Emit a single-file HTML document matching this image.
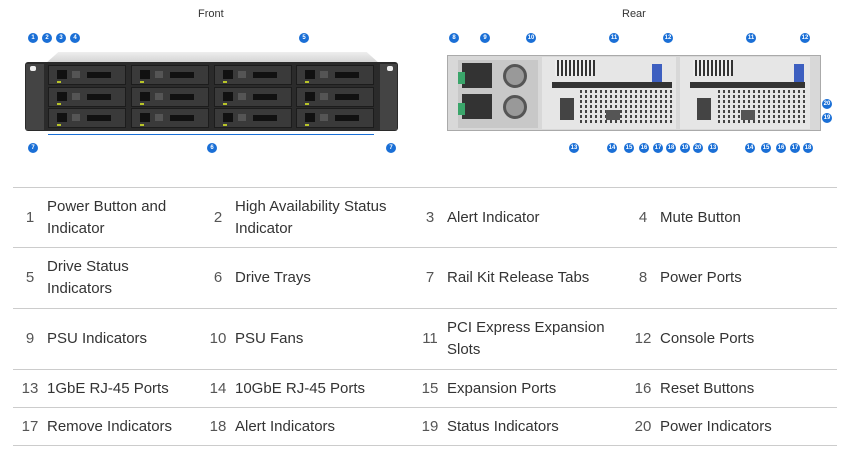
<!DOCTYPE html><html><head><style>
body{margin:0;width:850px;height:459px;background:#fff;font-family:"Liberation Sans",sans-serif;position:relative;overflow:hidden}
.a{position:absolute}
.b{position:absolute;width:10px;height:10px;border-radius:50%;background:#1a6fd6;color:#fff;font-size:6px;line-height:10px;text-align:center;font-weight:bold}
.bay{position:absolute;width:78px;height:20px;background:#3a3a3a;border:1px solid #1c1c1c;box-sizing:border-box}
.bay i{position:absolute;left:8px;top:4px;width:10px;height:9px;background:#111}
.bay u{position:absolute;left:23px;top:5px;width:8px;height:7px;background:#555}
.bay s{position:absolute;left:38px;top:6px;width:24px;height:6px;background:#111}
.bay b{position:absolute;left:8px;top:15px;width:4px;height:2px;background:#b8c428}
.v{position:absolute;background-color:#e2e2e2;background-image:linear-gradient(90deg,transparent 0 2px,#e2e2e2 2px),linear-gradient(transparent 0 2px,#e2e2e2 2px),linear-gradient(#333,#333);background-size:5px 5px,5px 5px,100% 100%;background-blend-mode:normal}
table{position:absolute;left:13px;top:187px;width:824px;border-collapse:collapse;font-size:15px;color:#333}
td{border-top:1.5px solid #ccc;border-bottom:1.5px solid #ccc;padding:0;vertical-align:middle;line-height:22px}
td.n{width:34px;text-align:center;color:#555}
</style></head><body>
<div class="a" style="left:198px;top:8px;font-size:11px;color:#333">Front</div>
<div class="a" style="left:622px;top:8px;font-size:11px;color:#333">Rear</div>
<div class="a" style="left:45px;top:52px;width:335px;height:12px;background:linear-gradient(#eee,#cfcfcf);clip-path:polygon(4% 0,96% 0,100% 100%,0 100%)"></div>
<div class="a" style="left:25px;top:62px;width:373px;height:69px;background:#2b2b2b;border-radius:3px"></div>
<div class="a" style="left:26px;top:64px;width:18px;height:66px;background:#444"></div>
<div class="a" style="left:380px;top:64px;width:17px;height:66px;background:#444"></div>
<div class="a" style="left:30px;top:66px;width:6px;height:5px;background:#eee;border-radius:2px"></div>
<div class="a" style="left:387px;top:66px;width:6px;height:5px;background:#eee;border-radius:2px"></div>
<div id="bays"></div>
<script>
var h='';var xs=[48,131,214,296],ys=[65,87,108];
ys.forEach(function(y){xs.forEach(function(x){h+='<div class="bay" style="left:'+x+'px;top:'+y+'px"><i></i><u></u><s></s><b></b></div>';});});
document.getElementById('bays').outerHTML=h;
</script>
<div class="a" style="left:48px;top:134px;width:326px;height:1px;background:#1a6fd6"></div>
<div class="b" style="left:28px;top:33px">1</div><div class="b" style="left:42px;top:33px">2</div><div class="b" style="left:56px;top:33px">3</div><div class="b" style="left:70px;top:33px">4</div><div class="b" style="left:299px;top:33px">5</div>
<div class="b" style="left:28px;top:143px">7</div><div class="b" style="left:207px;top:143px">6</div><div class="b" style="left:386px;top:143px">7</div>
<div class="a" style="left:447px;top:55px;width:374px;height:76px;background:#d8d8d8;border:1px solid #aaa;box-sizing:border-box"></div>
<div class="a" style="left:458px;top:60px;width:80px;height:68px;background:#c8c8c8"></div>
<div class="a" style="left:462px;top:63px;width:30px;height:25px;background:#333"></div>
<div class="a" style="left:462px;top:94px;width:30px;height:25px;background:#333"></div>
<div class="a" style="left:458px;top:72px;width:7px;height:12px;background:#3aa56a"></div>
<div class="a" style="left:458px;top:103px;width:7px;height:12px;background:#3aa56a"></div>
<div class="a" style="left:503px;top:64px;width:24px;height:24px;border-radius:50%;background:#999;border:3px solid #555;box-sizing:border-box"></div>
<div class="a" style="left:503px;top:95px;width:24px;height:24px;border-radius:50%;background:#999;border:3px solid #555;box-sizing:border-box"></div>
<div class="a" style="left:542px;top:57px;width:134px;height:72px;background:#e6e6e6"></div>
<div class="a" style="left:680px;top:57px;width:130px;height:72px;background:#e6e6e6"></div>
<div class="a" style="left:555px;top:60px;width:40px;height:16px;background:repeating-linear-gradient(90deg,#eee 0 2px,#333 2px 4px)"></div>
<div class="a" style="left:693px;top:60px;width:40px;height:16px;background:repeating-linear-gradient(90deg,#eee 0 2px,#333 2px 4px)"></div>
<div class="a" style="left:552px;top:82px;width:120px;height:6px;background:#333"></div>
<div class="a" style="left:690px;top:82px;width:115px;height:6px;background:#333"></div>
<div class="a" style="left:580px;top:90px;width:95px;height:35px;background:repeating-linear-gradient(90deg,transparent 0 2px,#e6e6e6 2px 5px),repeating-linear-gradient(#444 0 3px,#e6e6e6 3px 5px)"></div>
<div class="a" style="left:718px;top:90px;width:90px;height:35px;background:repeating-linear-gradient(90deg,transparent 0 2px,#e6e6e6 2px 5px),repeating-linear-gradient(#444 0 3px,#e6e6e6 3px 5px)"></div>
<div class="a" style="left:560px;top:98px;width:14px;height:22px;background:#444"></div>
<div class="a" style="left:697px;top:98px;width:14px;height:22px;background:#444"></div>
<div class="a" style="left:606px;top:110px;width:14px;height:10px;background:#555"></div>
<div class="a" style="left:741px;top:110px;width:14px;height:10px;background:#555"></div>
<div class="a" style="left:652px;top:64px;width:10px;height:18px;background:#3d5fc0"></div>
<div class="a" style="left:794px;top:64px;width:10px;height:18px;background:#3d5fc0"></div>
<div class="b" style="left:449px;top:33px">8</div><div class="b" style="left:480px;top:33px">9</div><div class="b" style="left:526px;top:33px">10</div><div class="b" style="left:609px;top:33px">11</div><div class="b" style="left:663px;top:33px">12</div><div class="b" style="left:746px;top:33px">11</div><div class="b" style="left:800px;top:33px">12</div>
<div class="b" style="left:822px;top:99px">20</div><div class="b" style="left:822px;top:113px">19</div>
<div class="b" style="left:569px;top:143px">13</div><div class="b" style="left:607px;top:143px">14</div><div class="b" style="left:624px;top:143px">15</div><div class="b" style="left:639px;top:143px">16</div><div class="b" style="left:653px;top:143px">17</div><div class="b" style="left:666px;top:143px">18</div><div class="b" style="left:680px;top:143px">19</div><div class="b" style="left:693px;top:143px">20</div><div class="b" style="left:708px;top:143px">13</div><div class="b" style="left:745px;top:143px">14</div><div class="b" style="left:761px;top:143px">15</div><div class="b" style="left:776px;top:143px">16</div><div class="b" style="left:790px;top:143px">17</div><div class="b" style="left:803px;top:143px">18</div>
<table>
<tr style="height:60px"><td class="n">1</td><td style="width:154px">Power Button and<br>Indicator</td><td class="n">2</td><td style="width:178px">High Availability Status<br>Indicator</td><td class="n">3</td><td style="width:179px">Alert Indicator</td><td class="n">4</td><td>Mute Button</td></tr>
<tr style="height:61px"><td class="n">5</td><td>Drive Status<br>Indicators</td><td class="n">6</td><td>Drive Trays</td><td class="n">7</td><td>Rail Kit Release Tabs</td><td class="n">8</td><td>Power Ports</td></tr>
<tr style="height:61px"><td class="n">9</td><td>PSU Indicators</td><td class="n">10</td><td>PSU Fans</td><td class="n">11</td><td>PCI Express Expansion<br>Slots</td><td class="n">12</td><td>Console Ports</td></tr>
<tr style="height:38px"><td class="n">13</td><td>1GbE RJ-45 Ports</td><td class="n">14</td><td>10GbE RJ-45 Ports</td><td class="n">15</td><td>Expansion Ports</td><td class="n">16</td><td>Reset Buttons</td></tr>
<tr style="height:38px"><td class="n">17</td><td>Remove Indicators</td><td class="n">18</td><td>Alert Indicators</td><td class="n">19</td><td>Status Indicators</td><td class="n">20</td><td>Power Indicators</td></tr>
</table>
</body></html>
